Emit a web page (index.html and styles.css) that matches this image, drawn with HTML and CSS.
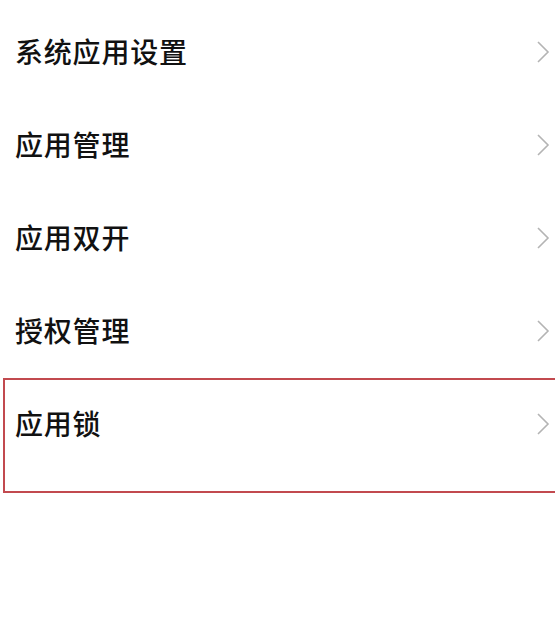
FILE: index.html
```html
<!DOCTYPE html>
<html>
<head>
    <title>应用</title>
    <link rel="stylesheet" href="styles.css">
</head>
<body>
<ul class="menu-list">
    <li class="menu-row">
        <span class="menu-label">系统应用设置</span>
        <svg class="chevron" width="14" height="24" viewBox="0 0 14 24"><polyline points="2,2 12,12 2,22"/></svg>
    </li>
    <li class="menu-row">
        <span class="menu-label">应用管理</span>
        <svg class="chevron" width="14" height="24" viewBox="0 0 14 24"><polyline points="2,2 12,12 2,22"/></svg>
    </li>
    <li class="menu-row">
        <span class="menu-label">应用双开</span>
        <svg class="chevron" width="14" height="24" viewBox="0 0 14 24"><polyline points="2,2 12,12 2,22"/></svg>
    </li>
    <li class="menu-row">
        <span class="menu-label">授权管理</span>
        <svg class="chevron" width="14" height="24" viewBox="0 0 14 24"><polyline points="2,2 12,12 2,22"/></svg>
    </li>
    <li class="menu-row menu-row-marked">
        <span class="menu-label">应用锁</span>
        <svg class="chevron" width="14" height="24" viewBox="0 0 14 24"><polyline points="2,2 12,12 2,22"/></svg>
    </li>
</ul>
</body>
</html>
```
FILE: styles.css
```css
body {
    margin: 0;
    background-color: #FFFFFF;
    font-family: "Noto Sans CJK SC", "Noto Sans", sans-serif;
    color: #111111;
}

.menu-list {
    list-style: none;
    margin: 0;
    padding: 6px 0 40px 0;
    overflow: hidden;
}

.menu-row {
    box-sizing: border-box;
    height: 93px;
    display: flex;
    align-items: center;
    justify-content: space-between;
    padding: 0 5px 4px 15px;
}

.menu-label {
    font-size: 28px;
    font-weight: 500;
    letter-spacing: 0.8px;
}

.chevron {
    margin-top: 2px;
}
.chevron polyline {
    fill: none;
    stroke: #B4B4B4;
    stroke-width: 1.6;
}

/* red annotation frame around the last row */
.menu-row-marked {
    position: relative;
}
.menu-row-marked::after {
    content: "";
    position: absolute;
    top: 0;
    left: 3px;
    right: -20px;
    height: 111px;
    border: 2px solid #C24A4F;
}
```
